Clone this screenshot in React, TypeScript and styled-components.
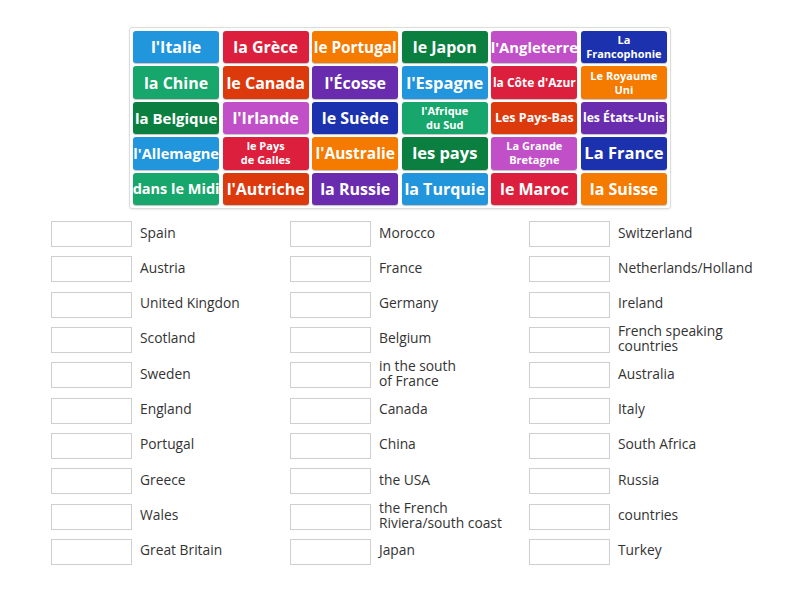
import React, { FC } from "react";
import styled, { createGlobalStyle } from "styled-components";

const GlobalStyle = createGlobalStyle`
  html, body {
    margin: 0;
    padding: 0;
    background: #ffffff;
  }
  body {
    font-family: "Open Sans", "Liberation Sans", sans-serif;
  }
`;

const palette = [
  "#2196dd", // blue
  "#dc1f3c", // red
  "#f47a00", // orange
  "#0a7f3f", // dark green
  "#c04fc8", // magenta
  "#1c31ad", // dark blue
  "#17a66b", // green
  "#dc3a0d", // red orange
  "#6a2cae", // purple
];

type TileData = { text: string; size: number };

const tiles: TileData[] = [
  { text: "l'Italie", size: 16 },
  { text: "la Grèce", size: 16 },
  { text: "le Portugal", size: 15.3 },
  { text: "le Japon", size: 16 },
  { text: "l'Angleterre", size: 14.8 },
  { text: "La\nFrancophonie", size: 11 },
  { text: "la Chine", size: 16 },
  { text: "le Canada", size: 16 },
  { text: "l'Écosse", size: 16 },
  { text: "l'Espagne", size: 16.5 },
  { text: "la Côte d'Azur", size: 12 },
  { text: "Le Royaume\nUni", size: 11 },
  { text: "la Belgique", size: 15 },
  { text: "l'Irlande", size: 16 },
  { text: "le Suède", size: 16 },
  { text: "l'Afrique\ndu Sud", size: 11 },
  { text: "Les Pays-Bas", size: 12.5 },
  { text: "les États-Unis", size: 12.2 },
  { text: "l'Allemagne", size: 14.6 },
  { text: "le Pays\nde Galles", size: 11 },
  { text: "l'Australie", size: 15.5 },
  { text: "les pays", size: 16.5 },
  { text: "La Grande\nBretagne", size: 11 },
  { text: "La France", size: 16.5 },
  { text: "dans le Midi", size: 14.5 },
  { text: "l'Autriche", size: 16 },
  { text: "la Russie", size: 16 },
  { text: "la Turquie", size: 16 },
  { text: "le Maroc", size: 16 },
  { text: "la Suisse", size: 16 },
];

const columns: string[][] = [
  [
    "Spain",
    "Austria",
    "United Kingdon",
    "Scotland",
    "Sweden",
    "England",
    "Portugal",
    "Greece",
    "Wales",
    "Great Britain",
  ],
  [
    "Morocco",
    "France",
    "Germany",
    "Belgium",
    "in the south\nof France",
    "Canada",
    "China",
    "the USA",
    "the French\nRiviera/south coast",
    "Japan",
  ],
  [
    "Switzerland",
    "Netherlands/Holland",
    "Ireland",
    "French speaking\ncountries",
    "Australia",
    "Italy",
    "South Africa",
    "Russia",
    "countries",
    "Turkey",
  ],
];

const Lines: FC<{ text: string }> = ({ text }) => (
  <>
    {text.split("\n").map((line, i) => (
      <React.Fragment key={i}>
        {i > 0 && <br />}
        {line}
      </React.Fragment>
    ))}
  </>
);

export default function App() {
  return (
    <Page>
      <GlobalStyle />
      <TilePanel>
        {tiles.map((t, i) => (
          <Tile key={i} $color={palette[i % palette.length]} $size={t.size}>
            <Lines text={t.text} />
          </Tile>
        ))}
      </TilePanel>
      <Answers>
        {columns.map((col, c) => (
          <AnswerColumn key={c}>
            {col.map((label, r) => (
              <AnswerRow key={r}>
                <DropBox />
                <Label>
                  <Lines text={label} />
                </Label>
              </AnswerRow>
            ))}
          </AnswerColumn>
        ))}
      </Answers>
    </Page>
  );
}

const Page = styled.div`
  width: 800px;
  height: 600px;
  padding-top: 27px;
  box-sizing: border-box;
`;

const TilePanel = styled.div`
  width: 542px;
  height: 182px;
  box-sizing: border-box;
  margin: 0 auto;
  padding: 3px;
  border: 1px solid #dcdcdc;
  border-radius: 3px;
  background: #ffffff;
  box-shadow: 0 1px 2px rgba(0, 0, 0, 0.08);
  display: grid;
  grid-template-columns: repeat(6, 1fr);
  grid-template-rows: repeat(5, 1fr);
  gap: 3px 3.4px;
`;

const Tile = styled.div<{ $color: string; $size: number }>`
  display: flex;
  align-items: center;
  justify-content: center;
  text-align: center;
  background: ${({ $color }) => $color};
  color: #ffffff;
  font-family: "Open Sans", "Liberation Sans", sans-serif;
  font-weight: 700;
  font-size: ${({ $size }) => $size}px;
  line-height: ${({ $size }) => ($size < 12 ? "14px" : "18px")};
  white-space: nowrap;
  overflow: hidden;
  border-radius: 3px;
  box-shadow: 0 1px 1px rgba(0, 0, 0, 0.25);
`;

const Answers = styled.div`
  margin-top: 12px;
  padding-left: 51px;
  display: grid;
  grid-template-columns: 239px 239px 239px;
`;

const AnswerColumn = styled.div`
  display: flex;
  flex-direction: column;
  row-gap: 9.33px;
`;

const AnswerRow = styled.div`
  display: flex;
  align-items: center;
  height: 26px;
  column-gap: 8px;
`;

const DropBox = styled.div`
  width: 81px;
  height: 26px;
  box-sizing: border-box;
  flex-shrink: 0;
  border: 1px solid #cfcfcf;
  background: #ffffff;
`;

const Label = styled.div`
  padding-bottom: 4px;
  font-family: "Open Sans", "Liberation Sans", sans-serif;
  font-size: 13.8px;
  line-height: 15px;
  color: #333333;
  white-space: nowrap;
`;
